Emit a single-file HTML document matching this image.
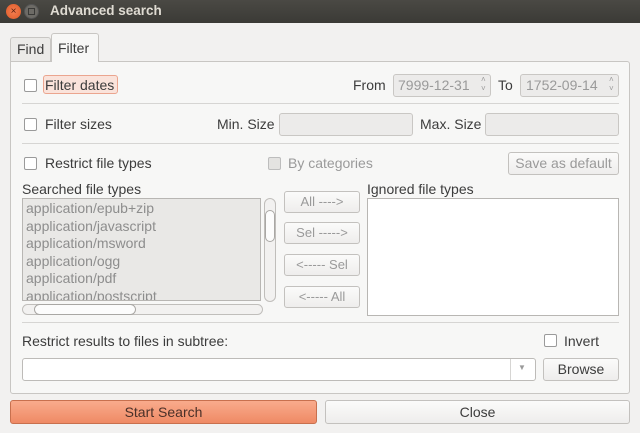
<!DOCTYPE html>
<html><head><style>
*{box-sizing:border-box;margin:0;padding:0}
body{width:640px;height:433px;background:#f2f1f0;font-family:"Liberation Sans",sans-serif;font-size:13px;color:#3c3c3c;position:relative;overflow:hidden}
.a{position:absolute;white-space:nowrap}
.t{line-height:16px}
.cb{position:absolute;width:13px;height:13px;border:1px solid #9a9a9a;border-radius:2px;background:#fff}
.inp{position:absolute;border:1px solid #c9c7c4;border-radius:3px;background:#ecebea}
.btn{position:absolute;border:1px solid #c3c1be;border-radius:3px;background:linear-gradient(#fbfbfa,#eeedec);text-align:center;color:#3c3c3c}
.sep{position:absolute;left:22px;width:597px;height:1px;background:#d6d5d3}
.g{color:#9a9a9a}
</style></head><body>
<div class="a" style="left:0;top:0;width:640px;height:23px;background:linear-gradient(#4a4944,#3b3a36)"></div>
<div class="a" style="left:6px;top:4px;width:15px;height:15px;border-radius:50%;background:radial-gradient(#f57f52,#e05a27);color:#5a2010;font-size:10px;text-align:center;line-height:15px">×</div>
<div class="a" style="left:24px;top:4px;width:15px;height:15px;border-radius:50%;background:#6d6b66;border:1px solid #555"><div style="margin:3px auto;width:7px;height:7px;border:1px solid #3a3a38"></div></div>
<div class="a t" style="left:50px;top:3px;color:#dfdbd2;font-weight:bold;font-size:13.5px">Advanced search</div>

<div class="a" style="left:10px;top:37px;width:41px;height:25px;border:1px solid #c8c6c3;border-bottom:none;border-radius:3px 3px 0 0;background:#ebeae8"></div>
<div class="a t" style="left:17px;top:41px;font-size:14px">Find</div>
<div class="a" style="left:51px;top:33px;width:48px;height:29px;border:1px solid #c8c6c3;border-bottom:none;border-radius:3px 3px 0 0;background:#f7f7f6;z-index:2"></div>
<div class="a t" style="left:58px;top:40px;font-size:14px;z-index:3">Filter</div>
<div class="a" style="left:10px;top:61px;width:620px;height:333px;border:1px solid #c8c6c3;border-radius:0 3px 3px 3px;background:#f7f7f6"></div>

<div class="cb" style="left:24px;top:79px"></div>
<div class="a" style="left:43px;top:75px;width:75px;height:19px;border:1px solid #eba58f;border-radius:3px;background:#fae3db"></div>
<div class="a t" style="left:45px;top:77px;font-size:14px">Filter dates</div>
<div class="a t" style="left:353px;top:77px;font-size:14px">From</div>
<div class="inp" style="left:393px;top:74px;width:98px;height:23px"></div>
<div class="a t g" style="left:398px;top:77px;font-size:14px">7999-12-31</div>
<div class="a g" style="left:481px;top:75px;font-size:8px;line-height:9px">˄<br>˅</div>
<div class="a t" style="left:498px;top:77px;font-size:14px">To</div>
<div class="inp" style="left:520px;top:74px;width:99px;height:23px"></div>
<div class="a t g" style="left:526px;top:77px;font-size:14px">1752-09-14</div>
<div class="a g" style="left:609px;top:75px;font-size:8px;line-height:9px">˄<br>˅</div>
<div class="sep" style="top:103px"></div>

<div class="cb" style="left:24px;top:118px"></div>
<div class="a t" style="left:45px;top:116px;font-size:14px">Filter sizes</div>
<div class="a t" style="left:217px;top:116px;font-size:14px">Min. Size</div>
<div class="inp" style="left:279px;top:113px;width:134px;height:23px"></div>
<div class="a t" style="left:420px;top:116px;font-size:14px">Max. Size</div>
<div class="inp" style="left:485px;top:113px;width:134px;height:23px"></div>
<div class="sep" style="top:143px"></div>

<div class="cb" style="left:24px;top:157px"></div>
<div class="a t" style="left:45px;top:155px;font-size:14px">Restrict file types</div>
<div class="cb" style="left:268px;top:157px;background:#e4e3e1;border-color:#bdbdbd"></div>
<div class="a t g" style="left:288px;top:155px;font-size:14px">By categories</div>
<div class="btn g" style="left:508px;top:152px;width:111px;height:23px;line-height:21px;font-size:14px">Save as default</div>

<div class="a t" style="left:22px;top:181px;font-size:14px">Searched file types</div>
<div class="a" style="left:22px;top:198px;width:239px;height:103px;border:1px solid #b8b6b3;background:#e9e8e6;overflow:hidden">
<div class="g" style="padding:1px 0 0 3px;font-size:14px;line-height:17.6px;color:#8d8d8d">application/epub+zip<br>application/javascript<br>application/msword<br>application/ogg<br>application/pdf<br>application/postscript</div></div>
<div class="a" style="left:264px;top:198px;width:12px;height:104px;border:1px solid #c0bebb;border-radius:6px;background:#f2f1f0"></div>
<div class="a" style="left:265px;top:210px;width:10px;height:32px;border:1px solid #a9a7a4;border-radius:5px;background:#fcfcfc"></div>
<div class="a" style="left:22px;top:304px;width:241px;height:11px;border:1px solid #c0bebb;border-radius:6px;background:#f2f1f0"></div>
<div class="a" style="left:34px;top:304px;width:102px;height:11px;border:1px solid #a9a7a4;border-radius:6px;background:#fcfcfc"></div>

<div class="btn g" style="left:284px;top:191px;width:76px;height:22px;line-height:20px">All ----&gt;</div>
<div class="btn g" style="left:284px;top:222px;width:76px;height:22px;line-height:20px">Sel -----&gt;</div>
<div class="btn g" style="left:284px;top:254px;width:76px;height:22px;line-height:20px">&lt;----- Sel</div>
<div class="btn g" style="left:284px;top:286px;width:76px;height:22px;line-height:20px">&lt;----- All</div>

<div class="a t" style="left:367px;top:181px;font-size:14px">Ignored file types</div>
<div class="a" style="left:367px;top:198px;width:252px;height:118px;border:1px solid #b8b6b3;background:#fff"></div>
<div class="sep" style="top:322px"></div>

<div class="a t" style="left:22px;top:333px;font-size:14px">Restrict results to files in subtree:</div>
<div class="cb" style="left:544px;top:334px"></div>
<div class="a t" style="left:564px;top:333px;font-size:14px">Invert</div>
<div class="a" style="left:22px;top:358px;width:514px;height:23px;border:1px solid #bdbbb8;border-radius:3px;background:#fff"></div>
<div class="a" style="left:510px;top:359px;width:1px;height:21px;background:#d6d5d3"></div>
<div class="a g" style="left:518px;top:363px;font-size:8px">▼</div>
<div class="btn" style="left:543px;top:358px;width:76px;height:23px;line-height:21px;font-size:14px">Browse</div>

<div class="a" style="left:10px;top:400px;width:307px;height:24px;border:1px solid #c8704e;border-radius:3px;background:linear-gradient(#f9ab8c,#ef8a65);text-align:center;line-height:22px;font-size:14px;color:#4a3028">Start Search</div>
<div class="btn" style="left:325px;top:400px;width:305px;height:24px;line-height:22px;font-size:14px">Close</div>
</body></html>
